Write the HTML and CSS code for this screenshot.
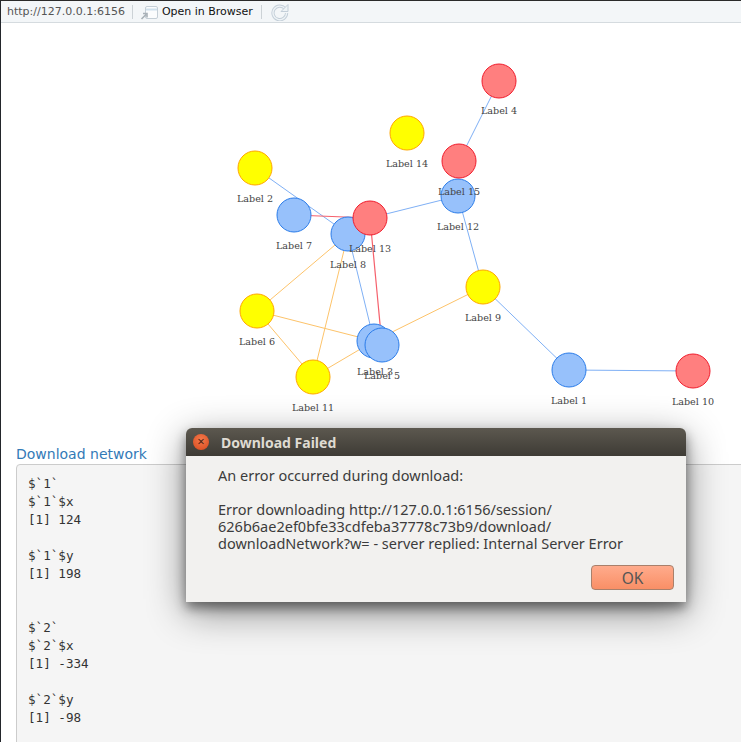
FILE: index.html
```html
<!DOCTYPE html>
<html lang="en">
<head>
  <meta charset="UTF-8">
  <title>Download network</title>
  <link rel="stylesheet" href="styles.css">
</head>
<body>
  <div class="toolbar">
    <span class="url">http://127.0.0.1:6156</span>
    <span class="sep sep-first"></span>
    <svg class="open-icon" width="18" height="16" viewBox="0 0 18 16">
      <rect x="5.5" y="2.5" width="12" height="12" rx="1.5" fill="#fbfcfd" stroke="#c4ced6"/>
      <path d="M6 5.5h11" stroke="#cfe0ec" stroke-width="2"/>
      <path d="M1.5 15l4.5-4.5M3 9.5h4v4" fill="none" stroke="#a9b1b7" stroke-width="1.6"/>
    </svg>
    <span class="open-text">Open in Browser</span>
    <span class="sep"></span>
    <svg class="reload-icon" width="18" height="18" viewBox="0 0 18 18">
      <path d="M14 5.5A6.8 6.8 0 1 0 15.6 10" fill="none" stroke="#c3ced8" stroke-width="3.2"/>
      <path d="M14 5.5A6.8 6.8 0 1 0 15.6 10" fill="none" stroke="#eef3f6" stroke-width="1.4"/>
      <path d="M10 8.5h7v-7z" fill="#eef3f6" stroke="#c3ced8"/>
    </svg>
  </div>

  <div class="graph">
    <svg width="740" height="421" viewBox="0 23 740 421">
      <g class="edge blue">
        <line x1="499" y1="81" x2="459" y2="161"/>
        <line x1="255" y1="168" x2="348" y2="234"/>
        <line x1="370" y1="218" x2="458" y2="196"/>
        <line x1="458" y1="196" x2="483" y2="287"/>
        <line x1="483" y1="287" x2="569" y2="370"/>
        <line x1="569" y1="370" x2="693" y2="371"/>
        <line x1="348" y1="234" x2="374" y2="341"/>
      </g>
      <g class="edge red">
        <line x1="294" y1="215" x2="370" y2="218"/>
        <line x1="370" y1="218" x2="382" y2="345"/>
      </g>
      <g class="edge orange">
        <line x1="348" y1="234" x2="257" y2="311"/>
        <line x1="348" y1="234" x2="313" y2="377"/>
        <line x1="257" y1="311" x2="374" y2="341"/>
        <line x1="257" y1="311" x2="313" y2="377"/>
        <line x1="313" y1="377" x2="374" y2="341"/>
        <line x1="483" y1="287" x2="374" y2="341"/>
      </g>

      <g class="node n-red"><circle cx="499" cy="81" r="17"/><text x="499" y="114">Label 4</text></g>
      <g class="node n-yellow"><circle cx="407" cy="133" r="17"/><text x="407" y="167">Label 14</text></g>
      <g class="node n-yellow"><circle cx="255" cy="168" r="17"/><text x="255" y="202">Label 2</text></g>
      <g class="node n-blue"><circle cx="458" cy="196" r="17"/><text x="458" y="230">Label 12</text></g>
      <g class="node n-red"><circle cx="459" cy="161" r="17"/><text x="459" y="195">Label 15</text></g>
      <g class="node n-blue"><circle cx="294" cy="215" r="17"/><text x="294" y="249">Label 7</text></g>
      <g class="node n-blue"><circle cx="348" cy="234" r="17"/><text x="348" y="268">Label 8</text></g>
      <g class="node n-red"><circle cx="370" cy="218" r="17"/><text x="370" y="252">Label 13</text></g>
      <g class="node n-yellow"><circle cx="483" cy="287" r="17"/><text x="483" y="321">Label 9</text></g>
      <g class="node n-yellow"><circle cx="257" cy="311" r="17"/><text x="257" y="345">Label 6</text></g>
      <g class="node n-blue"><circle cx="374" cy="341" r="17"/><text x="375" y="375">Label 3</text></g>
      <g class="node n-blue"><circle cx="382" cy="345" r="17"/><text x="382" y="379">Label 5</text></g>
      <g class="node n-blue"><circle cx="569" cy="370" r="17"/><text x="569" y="404">Label 1</text></g>
      <g class="node n-red"><circle cx="693" cy="371" r="17"/><text x="693" y="405">Label 10</text></g>
      <g class="node n-yellow"><circle cx="313" cy="377" r="17"/><text x="313" y="411">Label 11</text></g>
    </svg>
  </div>

  <div class="output">
    <a href="#" class="download-link">Download network</a>
    <pre>$`1`
$`1`$x
[1] 124

$`1`$y
[1] 198


$`2`
$`2`$x
[1] -334

$`2`$y
[1] -98

</pre>
  </div>

  <div class="dialog">
    <div class="dialog-title">
      <span class="close-btn">&times;</span>
      <span class="title-text">Download Failed</span>
    </div>
    <div class="dialog-body">
      <p>An error occurred during download:</p>
      <p>Error downloading http://127.0.0.1:6156/session/<br>626b6ae2ef0bfe33cdfeba37778c73b9/download/<br>downloadNetwork?w= - server replied: Internal Server Error</p>
      <div class="dialog-actions"><button class="ok-btn">OK</button></div>
    </div>
  </div>
</body>
</html>
```

FILE: styles.css
```css
html, body { height: 100%; }
body { margin: 0; background: #fff; border-left: 1px solid #23262b; border-top: 1px solid #2a2a2a; box-sizing: border-box; overflow: hidden; position: relative; font-family: "DejaVu Sans", sans-serif; }

.toolbar { display: flex; align-items: center; height: 21px; padding-left: 6px; background: #f3f6f8; border-bottom: 1px solid #d5dbdf; font-size: 11px; }
.url { color: #555; }
.sep { width: 1px; height: 14px; background: #ccd2d6; margin: 0 8px; }
.sep-first { margin-left: 7px; }
.open-icon { margin-left: -1px; margin-right: 4px; }
.open-text { color: #111; }
.reload-icon { margin-left: 1px; }

.graph { height: 421px; }
.graph svg { display: block; margin-left: -1px; }
.edge line { stroke-width: 1; }
.edge.blue line { stroke: #7fb0f5; }
.edge.red line { stroke: #f5606c; stroke-width: 1.2; }
.edge.orange line { stroke: #fdc36a; }
.node circle { stroke-width: 1; }
.node text { font-family: "DejaVu Serif", serif; font-size: 9.6px; fill: #444; text-anchor: middle; }
.n-red circle { fill: #ff7f7f; stroke: #f01c2c; }
.n-blue circle { fill: #97c1fb; stroke: #2b7ce9; }
.n-yellow circle { fill: #ffff00; stroke: #ffa500; }

.output { padding-left: 15px; margin-right: -20px; }
.download-link { display: block; font-size: 14px; line-height: 20px; color: #337ab7; text-decoration: none; }
pre { margin: 0; padding: 10px 11px; background: #f5f5f5; border: 1px solid #ccc; border-radius: 4px; font-family: "DejaVu Sans Mono", monospace; font-size: 12.6px; line-height: 18px; color: #333; }

.dialog { position: absolute; left: 185px; top: 427px; width: 500px; height: 174px; display: flex; flex-direction: column; border-radius: 6px 6px 0 0; background: #f2f1ef; box-shadow: 0 6px 12px rgba(0,0,0,0.45), 0 10px 38px rgba(0,0,0,0.45); font-family: "Noto Sans", sans-serif; }
.dialog-title { display: flex; align-items: center; height: 28px; flex-shrink: 0; padding-left: 7px; border-radius: 6px 6px 0 0; background: linear-gradient(#5c584f, #3e3b35); }
.close-btn { width: 16px; height: 16px; border-radius: 50%; background: radial-gradient(circle at 50% 35%, #f47a4c, #d8481c); color: #4a2414; font-size: 13px; line-height: 15px; text-align: center; }
.title-text { margin-left: 12px; font-size: 14px; font-weight: 700; color: #dfdbd2; }
.dialog-body { flex: 1; display: flex; flex-direction: column; padding: 11px 12px 12px 32px; font-size: 14.5px; line-height: 17px; color: #3c3c3c; }
.dialog-body p { margin: 0 0 17px; }
.dialog-body p:nth-child(2) { margin-bottom: 0; }
.dialog-actions { margin-top: auto; display: flex; justify-content: flex-end; }
.ok-btn { width: 83px; height: 25px; padding: 0; border: 1px solid #a9806b; border-radius: 4px; background: linear-gradient(#ffab8c, #f98f66); color: #555; font-family: inherit; font-size: 15.5px; line-height: 20px; }
```
